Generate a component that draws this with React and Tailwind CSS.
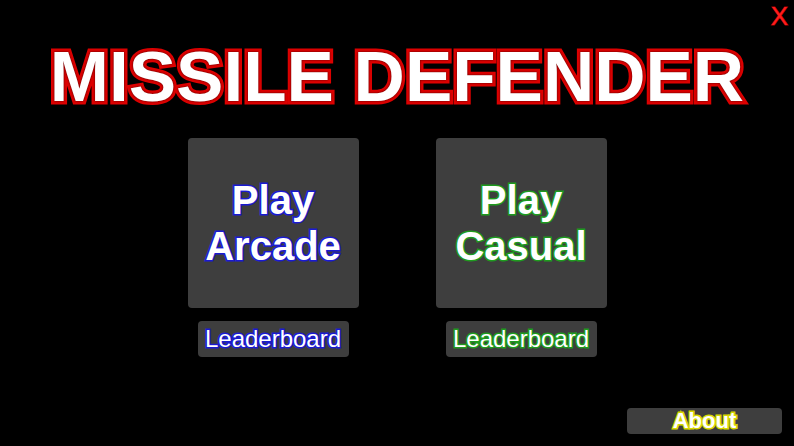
import React from 'react';

const outlineBlue = '[paint-order:stroke_fill] [-webkit-text-stroke:3px_#1a1ad0]';
const outlineGreen = '[paint-order:stroke_fill] [-webkit-text-stroke:3px_#1f9a1f]';

const ModeCard = ({ top, bottom, outline }) => (
  <div className="flex flex-col items-center">
    <button className="w-[171px] h-[170px] bg-[#3e3e3e] rounded-[4px] flex flex-col items-center justify-center">
      <span className={`text-white font-bold text-[40px] leading-[46px] ${outline}`}>{top}</span>
      <span className={`text-white font-bold text-[40px] leading-[46px] ${outline}`}>{bottom}</span>
    </button>
    <button className="mt-[13px] w-[151px] h-[36px] bg-[#3e3e3e] rounded-[4px] flex items-center justify-center">
      <span className={`text-white text-[24px] leading-none ${outline}`}>Leaderboard</span>
    </button>
  </div>
);

export default function App() {
  return (
    <div className="relative w-[794px] h-[446px] bg-black overflow-hidden font-['Liberation_Sans',Arial,sans-serif]">
      {/* close */}
      <button className="absolute top-[2px] right-[6px] text-[26px] leading-[28px] text-[#ff1c1c] [paint-order:stroke_fill] [-webkit-text-stroke:1px_#a00]">
        X
      </button>

      <div className="flex flex-col items-center pt-[41px]">
        <h1 className="text-white font-bold text-[71px] leading-[71px] tracking-normal [paint-order:stroke_fill] [-webkit-text-stroke:7px_#dd0000] [text-shadow:0_0_2px_#700,0_0_2px_#700]">
          MISSILE DEFENDER
        </h1>

        <div className="mt-[26px] flex gap-[77px]">
          <ModeCard top="Play" bottom="Arcade" outline={outlineBlue} />
          <ModeCard top="Play" bottom="Casual" outline={outlineGreen} />
        </div>
      </div>

      <div className="flex justify-end pr-[12px] mt-[51px]">
        <button className="w-[155px] h-[26px] bg-[#3e3e3e] rounded-[4px] flex items-center justify-center">
          <span className="text-white font-bold text-[22px] leading-none [paint-order:stroke_fill] [-webkit-text-stroke:3px_#d8d800]">
            About
          </span>
        </button>
      </div>
    </div>
  );
}
